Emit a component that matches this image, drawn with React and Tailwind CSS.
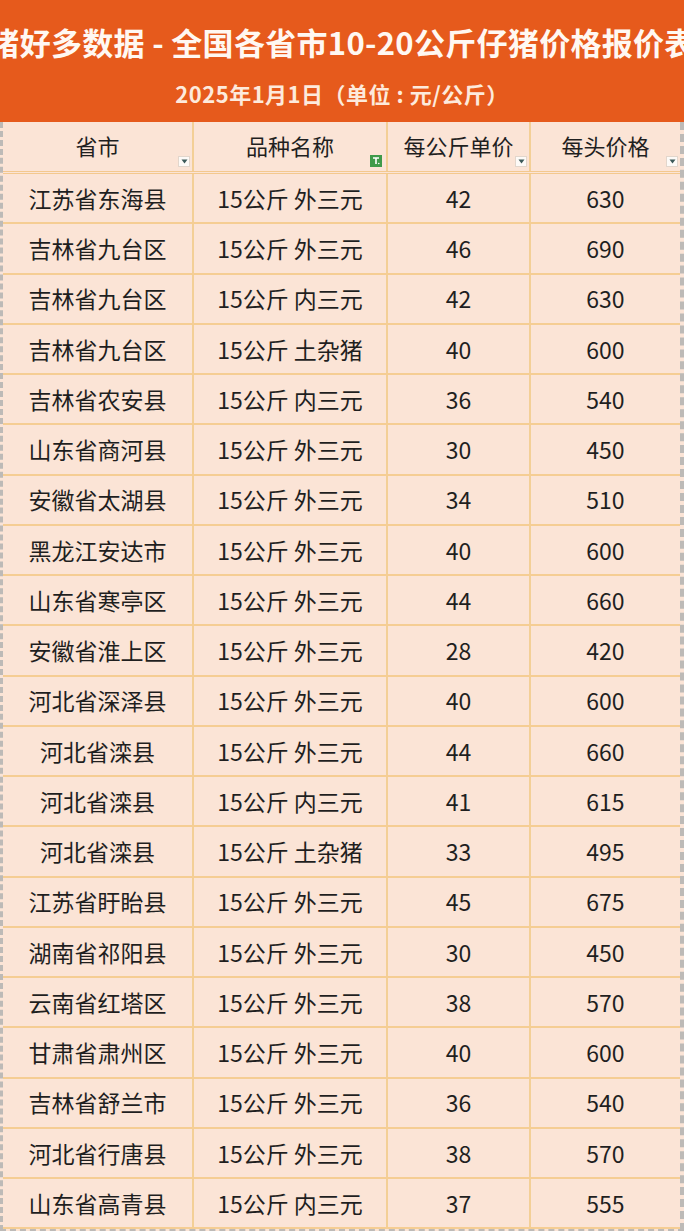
const rows = [
  ["江苏省东海县", "15公斤 外三元", "42", "630"],
  ["吉林省九台区", "15公斤 外三元", "46", "690"],
  ["吉林省九台区", "15公斤 内三元", "42", "630"],
  ["吉林省九台区", "15公斤 土杂猪", "40", "600"],
  ["吉林省农安县", "15公斤 内三元", "36", "540"],
  ["山东省商河县", "15公斤 外三元", "30", "450"],
  ["安徽省太湖县", "15公斤 外三元", "34", "510"],
  ["黑龙江安达市", "15公斤 外三元", "40", "600"],
  ["山东省寒亭区", "15公斤 外三元", "44", "660"],
  ["安徽省淮上区", "15公斤 外三元", "28", "420"],
  ["河北省深泽县", "15公斤 外三元", "40", "600"],
  ["河北省滦县", "15公斤 外三元", "44", "660"],
  ["河北省滦县", "15公斤 内三元", "41", "615"],
  ["河北省滦县", "15公斤 土杂猪", "33", "495"],
  ["江苏省盱眙县", "15公斤 外三元", "45", "675"],
  ["湖南省祁阳县", "15公斤 外三元", "30", "450"],
  ["云南省红塔区", "15公斤 外三元", "38", "570"],
  ["甘肃省肃州区", "15公斤 外三元", "40", "600"],
  ["吉林省舒兰市", "15公斤 外三元", "36", "540"],
  ["河北省行唐县", "15公斤 外三元", "38", "570"],
  ["山东省高青县", "15公斤 内三元", "37", "555"],
];

const FilterBtn = () => (
  <span className="absolute right-[2px] bottom-[4px] w-[12px] h-[11px] bg-[#fdfaf7] border border-[#e2d6cc] flex items-center justify-center">
    <svg width="7" height="5" viewBox="0 0 7 5">
      <path d="M0.5 0.5 L6.5 0.5 L3.5 4.5 Z" fill="#3d5a5a" />
    </svg>
  </span>
);

const FilterActive = () => (
  <span className="absolute right-[4px] bottom-[4px] w-[12px] h-[12px] bg-[#3f9a4a] flex items-center justify-center">
    <svg width="8" height="8" viewBox="0 0 8 8">
      <path d="M1 1 H7 M4 1 V7" stroke="#ffffff" strokeWidth="1.6" fill="none" />
      <circle cx="6.8" cy="6.5" r="0.8" fill="#ffffff" />
    </svg>
  </span>
);

const font = "font-['Microsoft_YaHei','Noto_Sans_CJK_SC',sans-serif]";

export default function App() {
  return (
    <div className={`w-[684px] h-[1231px] overflow-hidden bg-[#fbe4d6] ${font}`}>
      {/* orange title block */}
      <div className="h-[122px] bg-[#e65a1c] flex flex-col items-center overflow-hidden">
        <div className="w-full flex justify-center mt-[20px]">
          <span className="whitespace-nowrap text-[31px] leading-[44px] font-bold text-[#fff8f2] tracking-[0.3px]">
            猪好多数据 - 全国各省市10-20公斤仔猪价格报价表
          </span>
        </div>
        <div className="mt-[13px] whitespace-nowrap text-[22px] leading-[32px] font-bold text-[#fdeadc] tracking-[0.5px]">
          2025年1月1日（单位 : 元/公斤）
        </div>
      </div>

      {/* table */}
      <div className="border-l-[3px] border-r-[4px] border-b-[2px] border-dashed border-[#bdbab7]">
        <div className="grid grid-cols-[191px_194px_143px_149px] h-[52px] border-b-[3px] border-double border-[#f3c88e] text-[22px] text-[#1f1f1f]">
          <div className="relative flex items-center justify-center pb-[2px] border-r-2 border-[#f3cf96]">
            省市
            <FilterBtn />
          </div>
          <div className="relative flex items-center justify-center pb-[2px] border-r-2 border-[#f3cf96]">
            品种名称
            <FilterActive />
          </div>
          <div className="relative flex items-center justify-center pb-[2px] border-r-2 border-[#f3cf96]">
            每公斤单价
            <FilterBtn />
          </div>
          <div className="relative flex items-center justify-center pb-[2px]">
            每头价格
            <FilterBtn />
          </div>
        </div>
        {rows.map((r, i) => (
          <div
            key={i}
            className="grid grid-cols-[191px_194px_143px_149px] h-[50.25px] border-b-2 border-[#f5cd93] text-[23px] text-[#1f1f1f]"
          >
            <div className="flex items-center justify-center border-r-2 border-[#f3cf96]">{r[0]}</div>
            <div className="flex items-center justify-center border-r-2 border-[#f3cf96]">{r[1]}</div>
            <div className="flex items-center justify-center border-r-2 border-[#f3cf96]">{r[2]}</div>
            <div className="flex items-center justify-center">{r[3]}</div>
          </div>
        ))}
      </div>
    </div>
  );
}
